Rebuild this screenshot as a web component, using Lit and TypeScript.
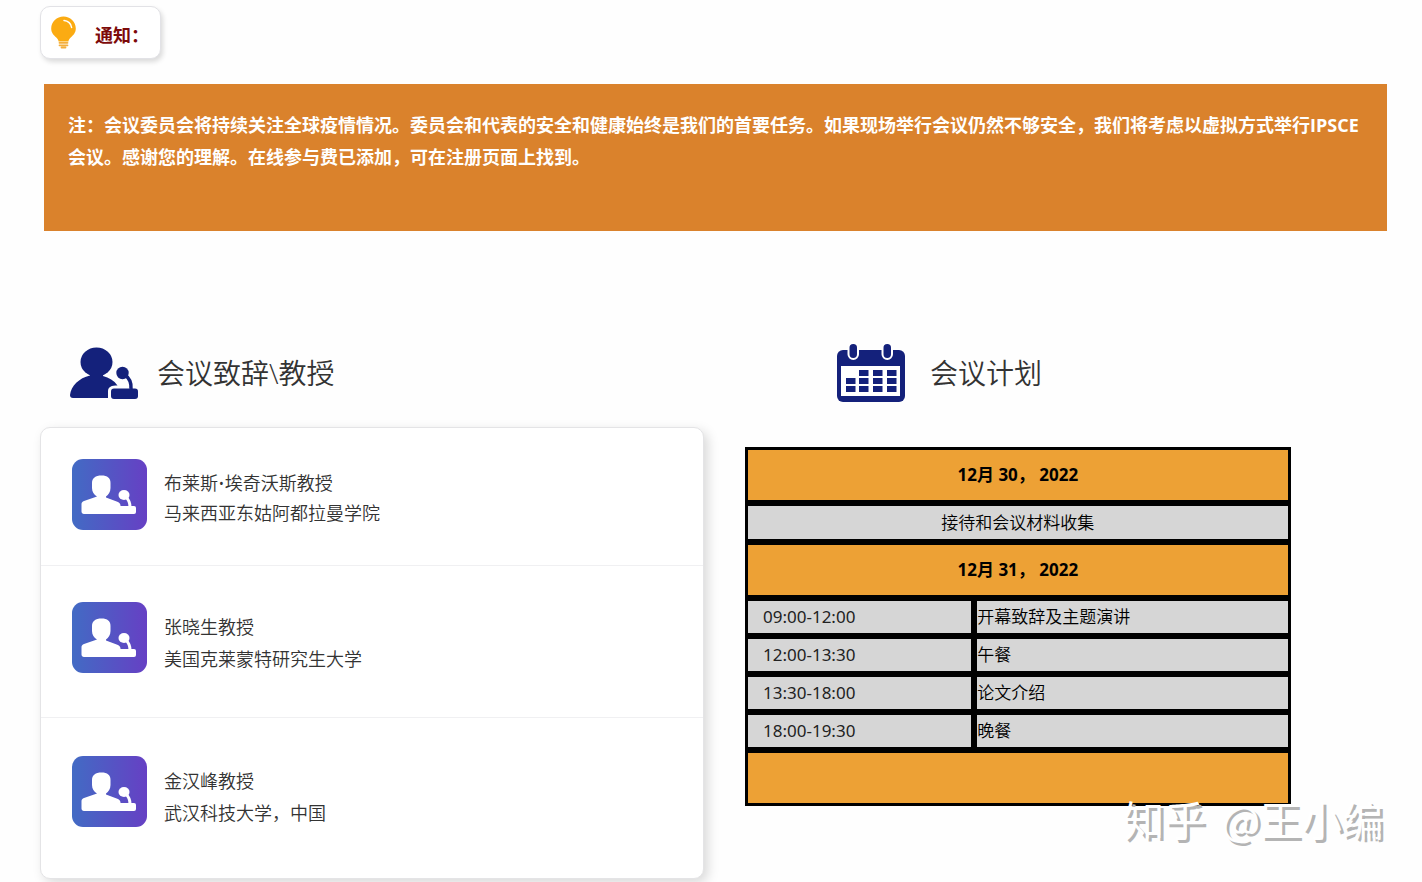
import { LitElement, html, css, svg } from "lit";
import { customElement } from "lit/decorators.js";

interface Speaker {
  name: string;
  school: string;
}

interface Session {
  time: string;
  title: string;
}

const speakers: Speaker[] = [
  { name: "布莱斯•埃奇沃斯教授", school: "马来西亚东姑阿都拉曼学院" },
  { name: "张晓生教授", school: "美国克莱蒙特研究生大学" },
  { name: "金汉峰教授", school: "武汉科技大学，中国" },
];

const sessions: Session[] = [
  { time: "09:00-12:00", title: "开幕致辞及主题演讲" },
  { time: "12:00-13:30", title: "午餐" },
  { time: "13:30-18:00", title: "论文介绍" },
  { time: "18:00-19:30", title: "晚餐" },
];

const bulbIcon = html`
  <svg class="bulb" viewBox="0 0 25 33" aria-hidden="true">
    <path fill="#fbab12" d="M12.5 0.5C5.8 0.5 0.2 5.9 0.2 12.500c0 4.400 2.500 6.500 4.800 8.800 1.500 1.500 2.300 2.700 2.600 4.200h9.800c.3-1.500 1.100-2.700 2.600-4.200 2.300-2.300 4.800-4.400 4.800-8.800C24.800 5.900 19.200 .5 12.500 .5z" />
    <path fill="none" stroke="#fff" stroke-width="1.500" stroke-linecap="round" d="M13 4.500c4 .2 7.200 3.200 7.600 7" />
    <path fill="none" stroke="#f3ae3c" stroke-width="1.800" stroke-linecap="round" d="M8.500 26.800h8M8.500 29.300h8M10.500 31.500h4" />
  </svg>
`;

const speakerIcon = html`
  <svg class="speaker-icon" viewBox="0 0 68 52" aria-hidden="true">
    <g fill="#14217b">
      <ellipse cx="26.500" cy="15" rx="16" ry="14.500" />
      <path d="M20 26h13v3c6 1.500 11 4.500 14.500 9.500-6 0-9.500 1-9.500 6V51H3c-2 0-3-1-3-3C1 39 9 31 20 28.500z" />
      <circle cx="52.500" cy="26" r="6.200" />
      <rect x="41" y="41.500" width="27" height="10.500" rx="3" />
    </g>
    <path fill="none" stroke="#14217b" stroke-width="3.500" d="M55 28c5 3.500 6.500 7.500 6 14" />
  </svg>
`;

const dayBoxes = [
  [22, 26], [36, 26], [50, 26],
  [9, 34], [22, 34], [36, 34], [50, 34],
  [9, 42], [22, 42], [36, 42], [50, 42],
];

const calendarIcon = html`
  <svg class="calendar-icon" viewBox="0 0 68 58" aria-hidden="true">
    <rect y="6" width="68" height="52" rx="6" fill="#14217b" />
    <rect x="4" y="22" width="59" height="30" fill="#fff" />
    <g fill="#14217b" stroke="#fff" stroke-width="2">
      <rect x="11.500" y="-1" width="9.500" height="16" rx="4.700" />
      <rect x="45.500" y="-1" width="9.500" height="16" rx="4.700" />
    </g>
    <g fill="#14217b">
      ${dayBoxes.map(([x, y]) => svg`<rect x=${x} y=${y} width="9.500" height="6" />`)}
    </g>
  </svg>
`;

const avatarIcon = html`
  <svg class="avatar" viewBox="0 0 75 71" aria-hidden="true">
    <defs>
      <linearGradient id="tile" x1="0" y1="0" x2="1" y2="0">
        <stop offset="0" stop-color="#426bc4" />
        <stop offset="1" stop-color="#6640c4" />
      </linearGradient>
    </defs>
    <rect width="75" height="71" rx="11" fill="url(#tile)" />
    <g fill="#fff">
      <path d="M20 24c0-5 3.500-7.500 9.500-7.500S38.500 19 38.500 24v5c0 4-2 6.500-4.500 8.500v1l12 4.500c1.500.7 2.500 2 2.500 3.500V55H12c-1.500 0-2.500-1-2.500-2.500V45c0-1.500 1-2.500 2.500-3l13-4.500c-3-2-5-4.500-5-8.500z" />
      <rect x="40" y="47" width="24" height="8" rx="2" />
      <ellipse cx="52" cy="36" rx="5.500" ry="5" />
    </g>
    <path fill="none" stroke="#fff" stroke-width="3" d="M54 38c3 3 4 6 4 10" />
  </svg>
`;

@customElement("app-root")
export class AppRoot extends LitElement {
  static styles = css`
    :host {
      display: block;
      position: relative;
      box-sizing: border-box;
      min-height: 100vh;
      padding: 6px 35px 3px 40px;
      background: #fefefe;
      color: #333;
      font-family: "Open Sans", "Noto Sans CJK SC", sans-serif;
      font-size: 18px;
      font-weight: 350;
    }
    h1, h2, p, ul {
      margin: 0;
      padding: 0;
    }
    .notice-tag {
      display: flex;
      align-items: center;
      gap: 19px;
      box-sizing: border-box;
      width: fit-content;
      height: 53px;
      padding: 0 11px 0 10px;
      border: 1px solid #e2e2e6;
      border-radius: 10px;
      background: #fff;
      box-shadow: 2px 3px 5px rgba(0, 0, 0, 0.14);
    }
    .bulb {
      width: 25px;
      height: 33px;
    }
    .notice-title {
      padding-top: 4px;
      color: #7d0a0a;
      font-size: 18px;
      font-weight: 700;
      line-height: 32px;
    }
    .banner {
      margin: 25px 0 0 4px;
      padding: 25px 20px 58px 24px;
      background: #da822c;
      color: #fff;
      font-weight: 700;
      line-height: 32px;
    }
    .columns {
      display: grid;
      grid-template-columns: 664fr 642fr;
      gap: 41px;
      margin-top: 108px;
    }
    .heading {
      display: flex;
      align-items: center;
      height: 68px;
      font-size: 28px;
      font-weight: 350;
      line-height: 40px;
    }
    .heading-speakers {
      gap: 19px;
      padding-left: 30px;
    }
    .heading-plan {
      gap: 25px;
      padding-left: 92px;
    }
    .speaker-icon {
      width: 68px;
      height: 52px;
    }
    .calendar-icon {
      width: 68px;
      height: 58px;
      overflow: visible;
    }
    .card {
      margin-top: 20px;
      border: 1px solid #e4e4e6;
      border-radius: 10px;
      background: #fff;
      box-shadow: 4px 4px 12px rgba(0, 0, 0, 0.15);
      list-style: none;
    }
    .speaker {
      display: flex;
      gap: 17px;
      padding: 36px 31px 44px;
      line-height: 32px;
    }
    .speaker + .speaker {
      border-top: 1px solid #f0f0f2;
    }
    .speaker:first-child {
      padding: 31px 31px 35px;
      line-height: 30px;
    }
    .speaker:last-child {
      padding: 38px 31px 51px;
    }
    .speaker-text {
      height: 62px;
      padding-top: 9px;
    }
    .avatar {
      flex: none;
      width: 75px;
      height: 71px;
    }
    .plan {
      width: 85%;
      margin-top: 40px;
      border-spacing: 0;
      table-layout: fixed;
      color: #000;
      font-family: "Noto Sans", "Noto Sans CJK SC", sans-serif;
      font-size: 17px;
      line-height: 24px;
    }
    .plan th,
    .plan td {
      box-sizing: border-box;
      border: 3px solid #000;
      padding: 0;
    }
    .plan .day {
      height: 56px;
      background: #eda135;
      font-weight: 700;
      text-align: center;
    }
    .plan .wide {
      height: 39px;
      background: #d6d6d6;
      text-align: center;
    }
    .time-col {
      width: 42%;
    }
    .plan .time,
    .plan .title {
      height: 38px;
      background: #d6d6d6;
      text-align: left;
    }
    .plan .title {
      font-weight: 350;
    }
    .plan .time {
      padding-left: 15px;
      color: #222;
      font-weight: 400;
    }
    .watermark {
      display: flex;
      gap: 16px;
      position: absolute;
      right: 39px;
      bottom: 36px;
      color: #fff;
      font-family: "Noto Sans CJK SC", sans-serif;
      font-size: 41px;
      font-weight: 400;
      line-height: 56px;
      text-shadow: 3px 3px 0 #b4b4b4;
      white-space: nowrap;
    }
  `;

  render() {
    return html`
      <header class="notice-tag" lang="zh-CN">
        ${bulbIcon}
        <h1 class="notice-title">通知：</h1>
      </header>
      <p class="banner" lang="zh-CN">注：会议委员会将持续关注全球疫情情况。委员会和代表的安全和健康始终是我们的首要任务。如果现场举行会议仍然不够安全，我们将考虑以虚拟方式举行IPSCE会议。感谢您的理解。在线参与费已添加，可在注册页面上找到。</p>
      <main class="columns" lang="zh-CN">
        <section>
          <h2 class="heading heading-speakers">${speakerIcon}<span>会议致辞\\教授</span></h2>
          <ul class="card">
            ${speakers.map(
              (s) => html`
                <li class="speaker">
                  ${avatarIcon}
                  <div class="speaker-text">
                    <p>${s.name}</p>
                    <p>${s.school}</p>
                  </div>
                </li>
              `
            )}
          </ul>
        </section>
        <section>
          <h2 class="heading heading-plan">${calendarIcon}<span>会议计划</span></h2>
          <table class="plan">
            <colgroup>
              <col class="time-col" />
              <col />
            </colgroup>
            <tbody>
              <tr><th class="day" colspan="2">12月 30， 2022</th></tr>
              <tr><td class="wide" colspan="2">接待和会议材料收集</td></tr>
              <tr><th class="day" colspan="2">12月 31， 2022</th></tr>
              ${sessions.map(
                (s) => html`
                  <tr>
                    <th class="time" scope="row">${s.time}</th>
                    <td class="title">${s.title}</td>
                  </tr>
                `
              )}
              <tr><td class="day" colspan="2"></td></tr>
            </tbody>
          </table>
        </section>
      </main>
      <div class="watermark" lang="zh-CN"><span>知乎</span><span>@王小编</span></div>
    `;
  }
}
